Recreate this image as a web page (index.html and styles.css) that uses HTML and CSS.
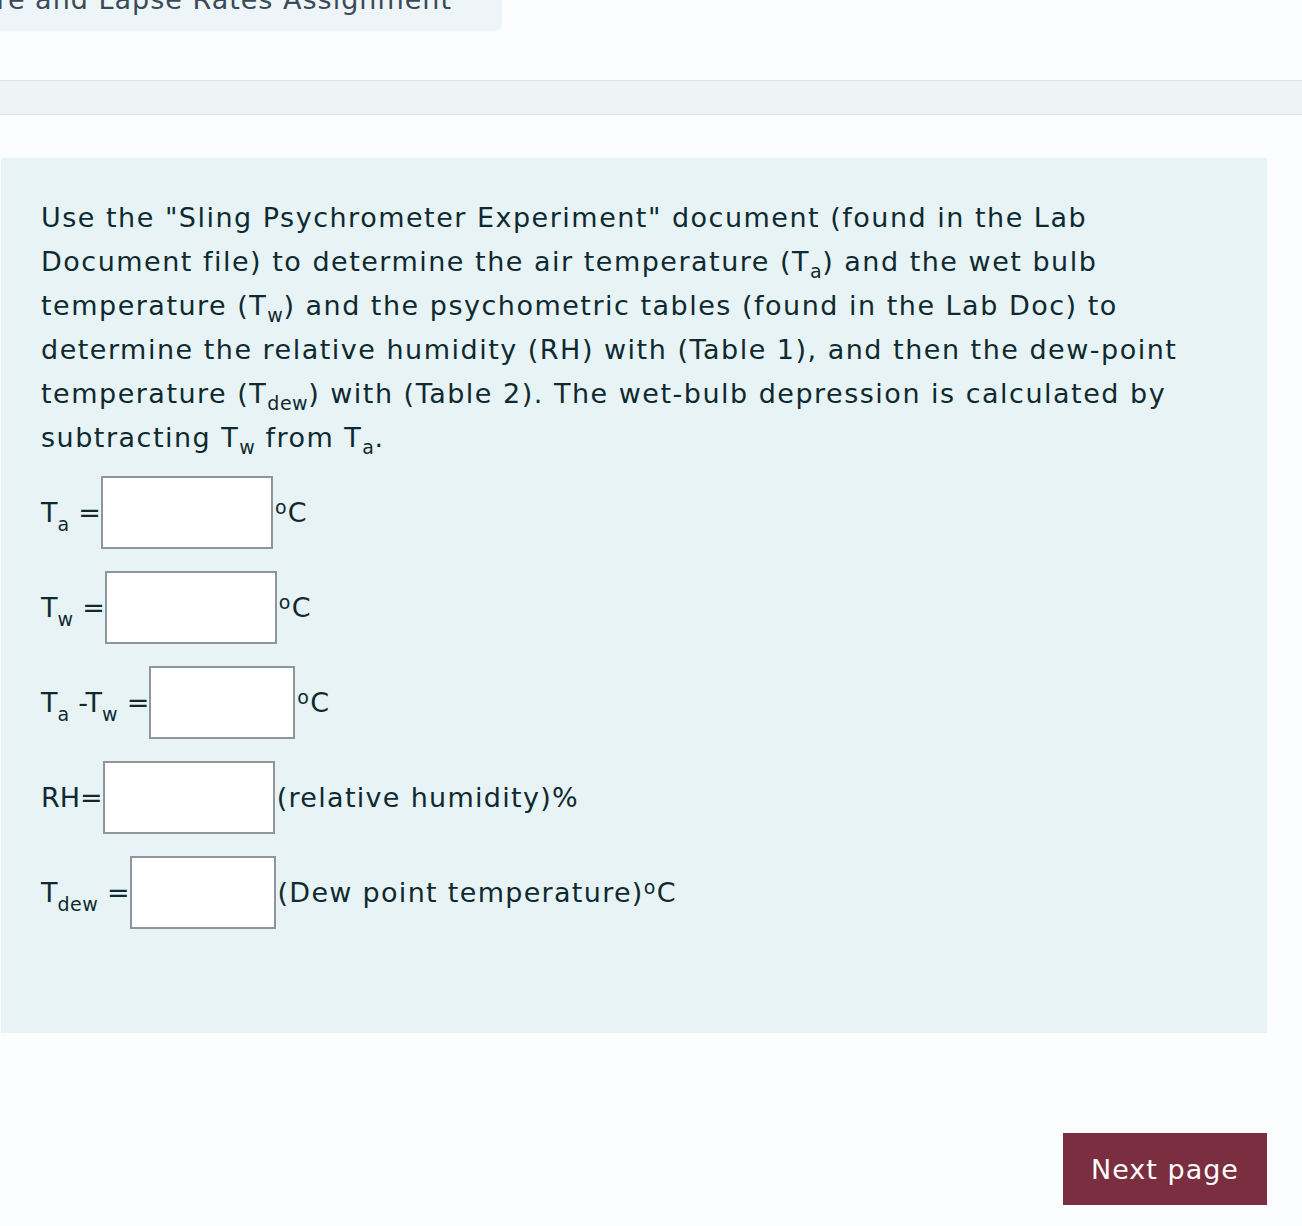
FILE: index.html
```html
<!DOCTYPE html>
<html lang="en">
<head>
<meta charset="utf-8">
<title>Sling Psychrometer</title>
<link rel="stylesheet" href="styles.css">
</head>
<body>
<div class="tab"><span class="tab-text">Moisture and Lapse Rates Assignment</span></div>
<div class="band"></div>
<div class="qbox">
  <p class="intro">Use the "Sling Psychrometer Experiment" document (found in the Lab<br>Document file) to determine the air temperature (T<sub>a</sub>) and the wet bulb<br>temperature (T<sub>w</sub>) and the psychometric tables (found in the Lab Doc) to<br>determine the relative humidity (RH) with (Table 1), and then the dew-point<br>temperature (T<sub>dew</sub>) with (Table 2). The wet-bulb depression is calculated by<br>subtracting T<sub>w</sub> from T<sub>a</sub>.</p>
  <div class="row"><span class="lbl">T<sub class="ls">a</sub> =</span><input class="ans" type="text"><span class="unit"><sup>o</sup>C</span></div>
  <div class="row"><span class="lbl">T<sub class="ls">w</sub> =</span><input class="ans" type="text"><span class="unit"><sup>o</sup>C</span></div>
  <div class="row"><span class="lbl">T<sub class="ls">a</sub> -T<sub class="ls">w</sub> =</span><input class="ans narrow" type="text"><span class="unit"><sup>o</sup>C</span></div>
  <div class="row"><span class="lbl">RH=</span><input class="ans" type="text"><span class="unit">(relative humidity)%</span></div>
  <div class="row"><span class="lbl">T<sub class="ls dew">dew</sub> =</span><input class="ans narrow" type="text"><span class="unit">(Dew point temperature)<sup>o</sup>C</span></div>
</div>
<div class="actions"><button class="next" type="button">Next page</button></div>
</body>
</html>
```

FILE: styles.css
```css
html, body {
  margin: 0;
  padding: 0;
  background: #fbfdfe;
  font-family: "DejaVu Sans", "Noto Sans", Arial, sans-serif;
  color: #0e2a30;
}

.tab {
  width: 502px;
  height: 31px;
  background: #eef5f8;
  border-bottom-right-radius: 8px;
  display: flex;
  justify-content: flex-end;
  align-items: flex-end;
  overflow: hidden;
  padding-right: 50px;
  box-sizing: border-box;
}

.tab-text {
  white-space: nowrap;
  font-size: 27px;
  letter-spacing: 1px;
  line-height: 28px;
  color: #3a4a56;
  margin-bottom: 17px;
}

.band {
  margin-top: 49px;
  height: 33px;
  background: #edf4f6;
  border-top: 1px solid #d9e1e4;
  border-bottom: 1px solid #d9e1e4;
}

.qbox {
  margin: 43px 35px 0 1px;
  background: #e7f3f5;
  padding: 38px 20px 105px 40px;
  box-sizing: border-box;
  height: 875px;
  letter-spacing: 1.3px;
}

.intro {
  margin: 0 0 16px 0;
  font-size: 27px;
  line-height: 44px;
  white-space: nowrap;
  letter-spacing: 1.5px;
}

sub {
  font-size: 19px;
  line-height: 0;
  vertical-align: -7px;
  letter-spacing: 0.5px;
}

sup {
  font-size: 19px;
  line-height: 0;
  vertical-align: 8px;
}

.row {
  display: flex;
  align-items: center;
  height: 73px;
  margin-bottom: 22px;
  font-size: 27px;
}

.lbl {
  white-space: nowrap;
  letter-spacing: 0;
  margin-right: 0;
}

.ls {
  vertical-align: -9px;
}

.ans {
  width: 172px;
  height: 73px;
  box-sizing: border-box;
  border: 2px solid #8f959e;
  background: #ffffff;
  margin: 0;
  padding: 0 10px;
  font: inherit;
}

.ans.narrow {
  width: 146px;
}

.unit {
  margin-left: 2px;
  white-space: nowrap;
}

.actions {
  display: flex;
  justify-content: flex-end;
  margin: 100px 35px 0 0;
}

.next {
  width: 204px;
  height: 72px;
  border: none;
  background: #7a2e40;
  color: #ffffff;
  font-family: inherit;
  font-size: 27px;
  letter-spacing: 1px;
  padding: 0;
}
```
